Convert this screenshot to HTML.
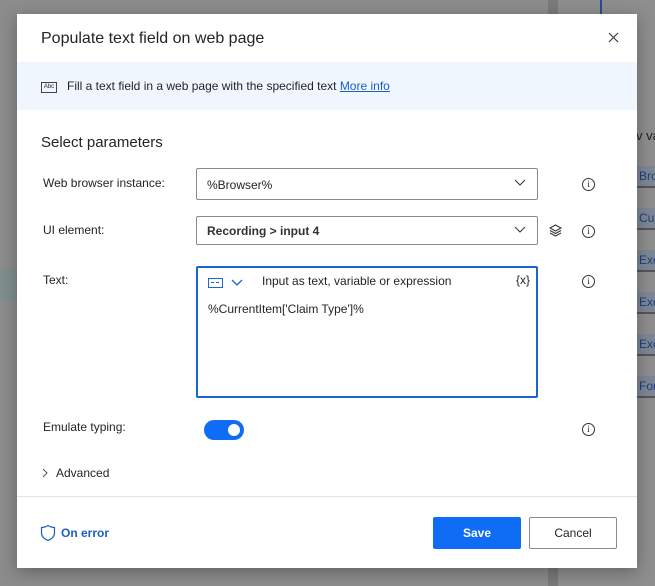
<!DOCTYPE html>
<html><head><style>
body{margin:0;width:655px;height:586px;background:#8a8a8a;font-family:"Liberation Sans",sans-serif;position:relative;overflow:hidden;color:#242424}
.a{position:absolute;white-space:nowrap}
.dlg{left:17px;top:14px;width:620px;height:554px;background:#fff;box-shadow:0 4px 16px rgba(0,0,0,.3)}
.lbl{font-size:12px;color:#242424}
.dd{border:1px solid #8a8a8a;border-radius:2px;background:#fff;font-size:12px;box-sizing:border-box}
.info{width:13px;height:13px;border:1px solid #333;border-radius:50%;box-sizing:border-box;font-size:9px;line-height:11px;text-align:center;font-family:"Liberation Serif",serif}
.side{background:#7d8796;color:#1f3f7a;font-size:12px;height:20px;line-height:20px;padding-left:3px;width:40px;border-bottom:2px solid #555;overflow:hidden}
</style></head><body>
<div class="a" style="left:0;top:0;width:548px;height:586px;background:#8c8c8c"></div>
<div class="a" style="left:548px;top:0;width:10px;height:586px;background:#7a7a7a"></div>
<div class="a" style="left:558px;top:0;width:97px;height:586px;background:#8e8e8e"></div>
<div class="a" style="left:600px;top:0;width:2px;height:14px;background:#2a4a9a"></div>
<div class="a" style="left:0;top:269px;width:17px;height:32px;background:#7f8f8d"></div>
<div class="a side" style="left:636px;top:166px">Bro</div>
<div class="a side" style="left:636px;top:208px">Cur</div>
<div class="a side" style="left:636px;top:250px">Exc</div>
<div class="a side" style="left:636px;top:292px">Exc</div>
<div class="a side" style="left:636px;top:334px">Exc</div>
<div class="a side" style="left:636px;top:376px">For</div>
<div class="a" style="left:636px;top:128px;font-size:13px;color:#222">v va</div>
<div class="a dlg">
 <div class="a" style="left:24px;top:16px;font-size:16px;color:#242424">Populate text field on web page</div>
 <svg class="a" style="left:591px;top:18px" width="11" height="11"><path d="M1 1L10 10M10 1L1 10" stroke="#333" stroke-width="1.1"/></svg>
 <div class="a" style="left:0;top:48px;width:620px;height:48px;background:#f0f6fe"></div>
 <div class="a" style="left:24px;top:68px;width:14px;height:9px;border:1px solid #444;font-size:6px;line-height:9px;text-align:center">Abc</div>
 <div class="a" style="left:50px;top:65px;font-size:12px">Fill a text field in a web page with the specified text <span style="color:#1a5fc8;text-decoration:underline">More info</span></div>
 <div class="a" style="left:24px;top:120px;font-size:15px">Select parameters</div>
 <div class="a lbl" style="left:26px;top:162px">Web browser instance:</div>
 <div class="a lbl" style="left:26px;top:209px">UI element:</div>
 <div class="a lbl" style="left:26px;top:259px">Text:</div>
 <div class="a lbl" style="left:26px;top:406px">Emulate typing:</div>
 <div class="a dd" style="left:179px;top:154px;width:342px;height:32px;padding:9px 10px">%Browser%</div>
 <div class="a dd" style="left:179px;top:202px;width:342px;height:29px;padding:7px 10px;font-weight:bold;color:#333">Recording &gt; input 4</div>
 <svg class="a" style="left:497px;top:165px" width="12" height="8"><path d="M1 1L6 6L11 1" fill="none" stroke="#333"/></svg>
 <svg class="a" style="left:497px;top:212px" width="12" height="8"><path d="M1 1L6 6L11 1" fill="none" stroke="#333"/></svg>
 <svg class="a" style="left:531px;top:209px" width="15" height="15"><path d="M7.5 2L13 5L7.5 8L2 5Z M2 7.5L7.5 10.5L13 7.5 M2 10L7.5 13L13 10" fill="none" stroke="#333"/></svg>
 <div class="a" style="left:179px;top:252px;width:342px;height:132px;border:2px solid #1a66d1;border-radius:2px;box-sizing:border-box"></div>
 <div class="a" style="left:191px;top:264px;width:13px;height:8px;border:1px solid #1a66d1"></div>
 <div class="a" style="left:194px;top:268px;width:8px;border-top:1px dashed #1a66d1"></div>
 <svg class="a" style="left:214px;top:265px" width="12" height="8"><path d="M1 1L6 6L11 1" fill="none" stroke="#1a66d1" stroke-width="1.3"/></svg>
 <div class="a lbl" style="left:245px;top:260px">Input as text, variable or expression</div>
 <div class="a lbl" style="left:499px;top:259px">{x}</div>
 <div class="a lbl" style="left:191px;top:288px">%CurrentItem['Claim Type']%</div>
 <div class="a info" style="left:565px;top:164px">i</div>
 <div class="a info" style="left:565px;top:211px">i</div>
 <div class="a info" style="left:565px;top:261px">i</div>
 <div class="a info" style="left:565px;top:409px">i</div>
 <div class="a" style="left:187px;top:406px;width:40px;height:20px;border-radius:10px;background:#0f6cf5"></div>
 <div class="a" style="left:211px;top:410px;width:12px;height:12px;border-radius:50%;background:#fff"></div>
 <svg class="a" style="left:25px;top:454px" width="6" height="10"><path d="M1 1L5 5L1 9" fill="none" stroke="#555"/></svg>
 <div class="a lbl" style="left:39px;top:452px">Advanced</div>
 <div class="a" style="left:0;top:482px;width:620px;height:1px;background:#e3e3e3"></div>
 <svg class="a" style="left:23px;top:510px" width="16" height="18"><path d="M8 1.5C5.5 3 3.5 3.5 1.5 3.5V9C1.5 12.5 4.5 15 8 16.5C11.5 15 14.5 12.5 14.5 9V3.5C12.5 3.5 10.5 3 8 1.5Z" fill="none" stroke="#1a5fc8" stroke-width="1.2"/></svg>
 <div class="a" style="left:44px;top:512px;font-size:12px;color:#1a5fc8;font-weight:bold">On error</div>
 <div class="a" style="left:416px;top:503px;width:88px;height:32px;background:#0f6cf5;border-radius:2px;color:#fff;font-size:12px;font-weight:bold;text-align:center;line-height:32px">Save</div>
 <div class="a" style="left:512px;top:503px;width:88px;height:32px;border:1px solid #8a8a8a;border-radius:2px;box-sizing:border-box;font-size:12px;text-align:center;line-height:30px">Cancel</div>
</div>
</body></html>
